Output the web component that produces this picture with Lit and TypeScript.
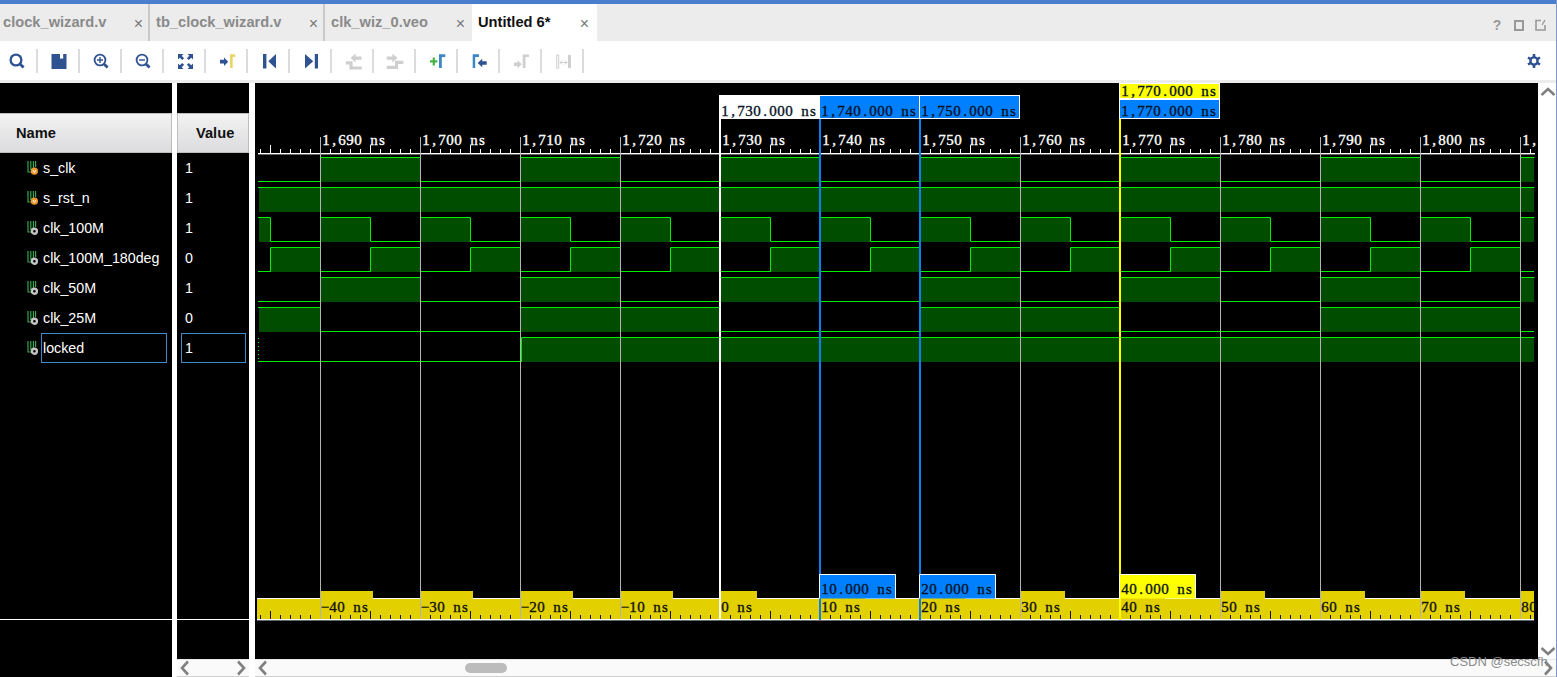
import { LitElement, html, css, svg } from "lit";
import { customElement } from "lit/decorators.js";

const GREEN = "#00ee00";
const FILL = "#004d00";
const GRID = "#b4b4b4";

type Seg = [number, number];
interface Sig { name: string; val: string; kind: "v" | "o"; top: number; high: Seg[] }

function periodic(start: number, width: number, gap: number, end = 1534): Seg[] {
  const out: Seg[] = [];
  for (let x = start; x < end; x += width + gap) out.push([Math.max(x, 259), Math.min(x + width, end)]);
  return out;
}

const SIGS: Sig[] = [
  { name: "s_clk", val: "1", kind: "v", top: 157, high: periodic(320, 100, 100) },
  { name: "s_rst_n", val: "1", kind: "v", top: 187, high: [[259, 1534]] },
  { name: "clk_100M", val: "1", kind: "o", top: 217, high: periodic(220, 50, 50).filter((s) => s[1] > 259) },
  { name: "clk_100M_180deg", val: "0", kind: "o", top: 247, high: periodic(270, 50, 50) },
  { name: "clk_50M", val: "1", kind: "o", top: 277, high: periodic(320, 100, 100) },
  { name: "clk_25M", val: "0", kind: "o", top: 307, high: periodic(120, 200, 200).filter((s) => s[1] > 259) },
  { name: "locked", val: "1", kind: "o", top: 337, high: [[521, 1534]] },
];

const mono = (x: number, y: number, s: string, fill: string) => {
  const chars = [...s];
  const xs = chars.map((_, i) => x + 4 + i * 8).join(" ");
  return svg`<text class="mono" x=${xs} y=${y} fill=${fill} stroke=${fill}>${s}</text>`;
};

const fmt = (n: number) => {
  const t = String(n);
  return t.length > 3 ? t.slice(0, t.length - 3) + "," + t.slice(-3) : t;
};

function trace(sig: Sig) {
  const top = sig.top + 0.5;
  const bot = sig.top + 24.5;
  let d = "";
  let x = 258;
  const segs = sig.high;
  if (segs[0][0] <= 259) d = `M258 ${top}`;
  else d = `M258 ${bot}`;
  for (const [a, b] of segs) {
    if (a > 259) d += `H${a + 0.5}V${top}`;
    d += `H${b + 0.5}`;
    if (b < 1534) d += `V${bot}`;
    x = b;
  }
  if (x < 1534) d += "H1534";
  return svg`
    ${segs.map(([a, b]) => svg`<rect x=${a} y=${sig.top + 1} width=${b - a} height="24" fill=${FILL}></rect>`)}
    <path d=${d} fill="none" stroke=${GREEN} stroke-width="1"></path>`;
}

function wave() {
  const minors = [];
  for (let x = 260; x < 1535; x += 10) {
    if ((x - 320) % 100 === 0) continue;
    const h = (x - 270) % 100 === 0 ? 8 : 4;
    minors.push(svg`<rect x=${x} y=${153 - h} width="1" height=${h} fill="#fff"></rect>`);
    minors.push(svg`<rect x=${x} y=${619 - h} width="1" height=${h} fill="#111"></rect>`);
  }
  const grid = [];
  const labels = [];
  const tabs = [];
  for (let i = 0; i < 13; i++) {
    const x = 320 + i * 100;
    const ns = -40 + i * 10;
    const s = `${ns < 0 ? "\u2212" + -ns : ns} ns`;
    grid.push(svg`<rect x=${x} y="137" width="1" height="482" fill=${GRID}></rect>`);
    const top = i === 12 ? "1," : `${fmt(1690 + i * 10)} ns`;
    labels.push(mono(x + 2, 145, top, "#fff"));
    const boxed = ns === 10 || ns === 20 || ns === 40;
    const w = Math.min([...s].length * 8 + 5, 1534 - x);
    tabs.push(svg`<rect x=${x} y=${boxed ? 598 : 591} width=${w} height="10" fill="#e2d000"></rect>`);
    labels.push(mono(x + 1, 612, i === 12 ? "80" : s, "#111"));
  }
  const boxes = [
    { x: 820, s: "10.000 ns", c: "#0080ff" },
    { x: 920, s: "20.000 ns", c: "#0080ff" },
    { x: 1120, s: "40.000 ns", c: "#ffff00" },
  ];
  const cursors = [
    { x: 719, c: "#fff", y: 118 },
    { x: 819, c: "#0a80f0", y: 118 },
    { x: 919, c: "#0a80f0", y: 118 },
    { x: 1119, c: "#ffff00", y: 98 },
  ];
  const heads = [
    { x: 719, y: 95, w: 101, h: 24, s: "1,730.000 ns", c: "#fff" },
    { x: 819, y: 95, w: 101, h: 24, s: "1,740.000 ns", c: "#0080ff" },
    { x: 919, y: 95, w: 101, h: 24, s: "1,750.000 ns", c: "#0080ff" },
    { x: 1119, y: 83, w: 101, h: 16, s: "1,770.000 ns", c: "#ffff00" },
    { x: 1119, y: 99, w: 101, h: 20, s: "1,770.000 ns", c: "#0080ff" },
  ];
  return html`<svg class="wave" viewBox="255 83 1283 576" width="1283" height="576">
    ${SIGS.map(trace)}
    <path d="M258.5 338V361" stroke=${GREEN} stroke-width="1" stroke-dasharray="1 3"></path>
    <rect x="258" y="153" width="1277" height="1.4" fill="#fff"></rect>
    <rect x="257" y="598" width="1277" height="21" fill="#e2d000"></rect>
    <rect x="257" y="598" width="1277" height="1" fill="#fff"></rect>
    <rect x="257" y="619" width="1277" height="1.4" fill="#fff"></rect>
    ${tabs}
    ${minors}
    ${grid}
    ${cursors.map((c) => svg`<rect x=${c.x} y=${c.y} width="2" height=${620 - c.y} fill=${c.c}></rect>`)}
    ${labels}
    ${heads.map((b) => svg`
      <rect x=${b.x + 0.5} y=${b.y + 0.5} width=${b.w - 1} height=${b.h - 1} fill=${b.c} stroke="#fff"></rect>
      ${mono(b.x + 2, b.y + b.h - 3, b.s, "#06121f")}`)}
    ${boxes.map((b) => svg`
      <path d="M${b.x - 0.5} 598.5V574.5H${b.x + 75.5}V598.5" fill=${b.c} stroke="#fff"></path>
      ${mono(b.x + 1, 594, b.s, "#06121f")}`)}
  </svg>`;
}

const D = "#2f5290";
const G = "#cfcfcf";
const Y = "#e9d468";
const B = "#3a87c8";
const P = "#45b445";

const ICONS = [
  svg`<circle cx="11" cy="11" r="5.4" fill="none" stroke=${D} stroke-width="2.3"></circle><path d="M15 15l3.6 3.6" stroke=${D} stroke-width="2.8"></path>`,
  svg`<path d="M4.5 5H19.5V20H4.5Z" fill=${D}></path><rect x="13" y="5" width="3.2" height="4.6" fill="#fff"></rect>`,
  svg`<circle cx="11" cy="11" r="5.4" fill="none" stroke=${D} stroke-width="1.8"></circle><path d="M15 15l3.6 3.6" stroke=${D} stroke-width="2.8"></path><path d="M8 11h6M11 8v6" stroke=${D} stroke-width="1.4"></path>`,
  svg`<circle cx="11" cy="11" r="5.4" fill="none" stroke=${D} stroke-width="1.8"></circle><path d="M15 15l3.6 3.6" stroke=${D} stroke-width="2.8"></path><path d="M8 11h6" stroke=${D} stroke-width="1.4"></path>`,
  svg`<g fill=${D}><path d="M5 5h5.5L8.7 6.8l2.4 2.4-1.9 1.9-2.4-2.4L5 10.5z"></path><path d="M20 5v5.5l-1.8-1.8-2.4 2.4-1.9-1.9 2.4-2.4L14.5 5z"></path><path d="M5 20v-5.5l1.8 1.8 2.4-2.4 1.9 1.9-2.4 2.4 1.8 1.8z"></path><path d="M20 20h-5.5l1.8-1.8-2.4-2.4 1.9-1.9 2.4 2.4 1.8-1.8z"></path></g>`,
  svg`<path d="M5 10.8h4V8.4l4.2 4.3L9 17v-2.4H5z" fill=${D}></path><path d="M15 5.3h5.2v2.6h-2.5V19H15z" fill=${Y}></path>`,
  svg`<rect x="6" y="5" width="3.4" height="14.5" fill=${D}></rect><path d="M19 5v14.5L11.3 12.2z" fill=${D}></path>`,
  svg`<rect x="15.8" y="5" width="3.2" height="14.5" fill=${D}></rect><path d="M6 5v14.5l8.2-7.3z" fill=${D}></path>`,
  svg`<path d="M9.6 9l5-4.4v2.9H20.5v3.2H14.6v2.9zM4.8 12.2h6.8v5.2h9.2v3.2H8.4v-5.2H4.8z" fill=${G}></path>`,
  svg`<path d="M14.4 9l-5-4.4v2.9H3.8v3.2h5.6v2.9zM3.8 16.8h8.2v-5h8.4v3.2h-5.4v5H3.8z" fill=${G}></path>`,
  svg`<path d="M5 11.2h2.7V8.5h2.2v2.7h2.5v2.4H9.9v2.9H7.7v-2.9H5z" fill=${P}></path><path d="M14 5.3h6.3v2.6h-3.5V19H14z" fill=${B}></path>`,
  svg`<path d="M5.7 5.3H12v2.6H8.2V19H5.7z" fill=${B}></path><path d="M10.7 14l4.5-4.2v2.4h4.5v3.6h-4.5v2.4z" fill=${D}></path>`,
  svg`<path d="M5 13.6h3.6v-2.4l4.1 4.1-4.1 4.1V17H5z" fill=${G}></path><path d="M13.7 5.5H20v2.5h-3.5V19h-2.8z" fill=${G}></path>`,
  svg`<rect x="5.7" y="6" width="2" height="13" fill="none" stroke=${G} stroke-width="1"></rect><rect x="17" y="6" width="3" height="13" fill=${G}></rect><path d="M9 13.5h7M9 13.5l2-2M9 13.5l2 2M16 13.5l-2-2M16 13.5l-2 2" stroke=${G} stroke-width="1" fill="none"></path>`,
];

const sigIcon = (kind: "v" | "o") => html`<svg class="sig" viewBox="0 0 12 14" width="12" height="14">
  <path d="M1 0V11H5M3.8 0V8.4H6.4V0M8.6 0V6" fill="none" stroke="#36a64f" stroke-width="1.2"></path>
  ${kind === "v"
    ? svg`<circle cx="7.4" cy="10.2" r="3.6" fill="#f0982c"></circle><path d="M6 9l1.4 2.6L8.8 9" fill="none" stroke="#fff" stroke-width="0.9"></path>`
    : svg`<circle cx="7.4" cy="10.2" r="2.5" fill="none" stroke="#c4c4c4" stroke-width="2.4"></circle>`}
</svg>`;

const chev = (dir: "l" | "r" | "u" | "d") => {
  const d = { l: "M10 1.5L4 8l6 6.5", r: "M5 1.5L11 8l-6 6.5", u: "M1.5 11L8 5l6.5 6", d: "M1.5 5L8 11l6.5-6" }[dir];
  return html`<svg class="chev" viewBox="0 0 16 16" width="16" height="16"><path d=${d} fill="none" stroke="#808080" stroke-width="2.6"></path></svg>`;
};

@customElement("app-root")
export class AppRoot extends LitElement {
  static styles = css`
    :host {
      display: flex;
      flex-direction: column;
      position: relative;
      width: 1557px;
      height: 677px;
      overflow: hidden;
      background: #fff;
      font-family: "Liberation Sans", Arial, sans-serif;
    }
    :host::after {
      content: "";
      position: absolute;
      top: 0;
      right: 0;
      bottom: 0;
      width: 1px;
      background: #7f97c4;
    }
    .top { height: 4px; background: #4a7dce; flex: none; }
    .tabs { height: 37px; flex: none; display: flex; background: #ececec; }
    .tab {
      display: flex;
      align-items: center;
      justify-content: space-between;
      padding: 0 5px 2px 3px;
      box-sizing: border-box;
      border-right: 2px solid #c9c9c9;
      font-size: 14.67px;
      font-weight: 700;
      color: #8a8a8a;
    }
    .tab.t1 { width: 150px; }
    .tab.t2 { width: 175px; padding-left: 6px; }
    .tab.t3 { width: 147px; padding-left: 6px; border-right-color: #ececec; }
    .tab.t4 { width: 125px; padding-left: 6px; background: #fff; color: #111; border-right: none; padding-right: 8px; }
    .x { font-weight: 400; font-size: 16px; color: #777; padding-top: 5px; }
    .winbtns { margin-left: auto; display: flex; padding-right: 5px; align-items: center; padding-top: 5px; color: #999; }
    .winbtn { width: 22px; display: flex; justify-content: center; font-size: 14px; font-weight: 700; }
    .toolbar { height: 39px; flex: none; display: flex; align-items: center; background: #fff; }
    .cells { display: flex; margin-left: -4px; }
    .cell {
      width: 42px;
      height: 24px;
      box-sizing: border-box;
      border-right: 2px solid #dcdcdc;
      display: flex;
      align-items: center;
      justify-content: center;
      padding-left: 1px;
    }
    .gear { margin-left: auto; margin-right: 15px; display: flex; }
    .sep { height: 3px; flex: none; background: #ececec; }
    .main { flex: 1; display: flex; background: #fff; min-height: 0; }
    .names { width: 172px; background: #000; flex: none; display: flex; flex-direction: column; }
    .vals { width: 72px; margin-left: 5px; flex: none; display: flex; flex-direction: column; }
    .black { background: #000; flex: 1; display: flex; flex-direction: column; }
    .head-space { height: 30px; flex: none; }
    .head {
      height: 40px;
      flex: none;
      box-sizing: border-box;
      border: 1px solid #bdbdbd;
      border-left: none;
      background: linear-gradient(#f2f2f2, #dcdcdf);
      display: flex;
      align-items: center;
      font-size: 14.67px;
      font-weight: 700;
      color: #111;
      padding-left: 16px;
    }
    .vals .head { border-left: 1px solid #bdbdbd; padding-left: 18px; }
    .row {
      height: 30px;
      flex: none;
      display: flex;
      align-items: center;
      padding-left: 27px;
      color: #fff;
      font-size: 14.25px;
    }
    .sig { flex: none; margin-right: 2px; }
    .cellbox {
      box-sizing: border-box;
      height: 30px;
      border: 1px solid transparent;
      display: flex;
      align-items: center;
    }
    .row .cellbox { width: 126px; padding-left: 1px; }
    .row.v { padding-left: 4px; }
    .row.v .cellbox { width: 65px; padding-left: 3px; }
    .sel .cellbox { border-color: #3b8ccb; }
    .spacer { height: 256px; flex: none; }
    .line { height: 1px; background: #fff; flex: none; }
    .hbar {
      height: 18px;
      flex: none;
      box-sizing: border-box;
      background: #fafafa;
      border-top: 1px solid #e8e8e8;
      border-bottom: 1px solid #d0d0d0;
      display: flex;
      align-items: center;
    }
    .vals .hbar { justify-content: space-between; padding: 0 0 0 1px; }
    .right { flex: 1; margin-left: 6px; display: flex; flex-direction: column; min-width: 0; }
    .upper { display: flex; height: 576px; flex: none; }
    .wave { display: block; flex: none; background: #000; }
    .mono {
      font-family: "Liberation Serif", "Times New Roman", serif;
      font-size: 15px;
      text-anchor: middle;
      stroke-width: 0.35px;
    }
    .vbar {
      flex: 1;
      display: flex;
      flex-direction: column;
      justify-content: space-between;
      align-items: center;
      padding: 1px 0 0 0;
    }
    .chev { display: block; flex: none; }
    .wb { padding-left: 1px; }
    .thumb { width: 42px; height: 10px; border-radius: 5px; background: #bcbcbc; margin-left: 193px; }
    .endchev { margin-left: auto; margin-right: 1px; }
    .mark {
      position: absolute;
      left: 1450px;
      top: 654px;
      font-size: 13px;
      color: #8a8a8a;
      white-space: nowrap;
    }
  `;

  render() {
    return html`
      <div class="top"></div>
      <div class="tabs">
        <div class="tab t1"><span>clock_wizard.v</span><span class="x">×</span></div>
        <div class="tab t2"><span>tb_clock_wizard.v</span><span class="x">×</span></div>
        <div class="tab t3"><span>clk_wiz_0.veo</span><span class="x">×</span></div>
        <div class="tab t4"><span>Untitled 6*</span><span class="x">×</span></div>
        <div class="winbtns">
          <span class="winbtn">?</span>
          <span class="winbtn"><svg width="10" height="11" viewBox="0 0 10 11"><rect x="1" y="1" width="8" height="9" fill="none" stroke="#999" stroke-width="2"></rect></svg></span>
          <span class="winbtn"><svg width="12" height="12" viewBox="0 0 12 12"><path d="M6 1.5H1V11H10V6" fill="none" stroke="#999" stroke-width="1.6"></path><path d="M7 6l3-5" stroke="#999" stroke-width="1.4"></path></svg></span>
        </div>
      </div>
      <div class="toolbar">
        <div class="cells">
          ${ICONS.map((i) => html`<div class="cell"><svg width="24" height="24" viewBox="0 0 24 24">${i}</svg></div>`)}
        </div>
        <div class="gear">
          <svg width="16" height="16" viewBox="0 0 16 16">
            <g stroke=${D} stroke-width="2.6"><path d="M8 1v14M2 4.5l12 7M2 11.5l12-7"></path></g>
            <circle cx="8" cy="8" r="3.6" fill="#fff" stroke=${D} stroke-width="2.4"></circle>
          </svg>
        </div>
      </div>
      <div class="sep"></div>
      <div class="main">
        <div class="names">
          <div class="head-space"></div>
          <div class="head">Name</div>
          ${SIGS.map((s) => html`<div class="row ${s.name === "locked" ? "sel" : ""}">${sigIcon(s.kind)}<div class="cellbox">${s.name}</div></div>`)}
          <div class="spacer"></div>
          <div class="line"></div>
        </div>
        <div class="vals">
          <div class="black">
            <div class="head-space"></div>
            <div class="head">Value</div>
            ${SIGS.map((s) => html`<div class="row v ${s.name === "locked" ? "sel" : ""}"><div class="cellbox">${s.val}</div></div>`)}
            <div class="spacer"></div>
            <div class="line"></div>
          </div>
          <div class="hbar">${chev("l")}${chev("r")}</div>
        </div>
        <div class="right">
          <div class="upper">
            ${wave()}
            <div class="vbar">${chev("u")}${chev("d")}</div>
          </div>
          <div class="hbar wb">${chev("l")}<div class="thumb"></div><span class="endchev">${chev("r")}</span></div>
        </div>
      </div>
      <div class="mark">CSDN @secscfh</div>
    `;
  }
}
